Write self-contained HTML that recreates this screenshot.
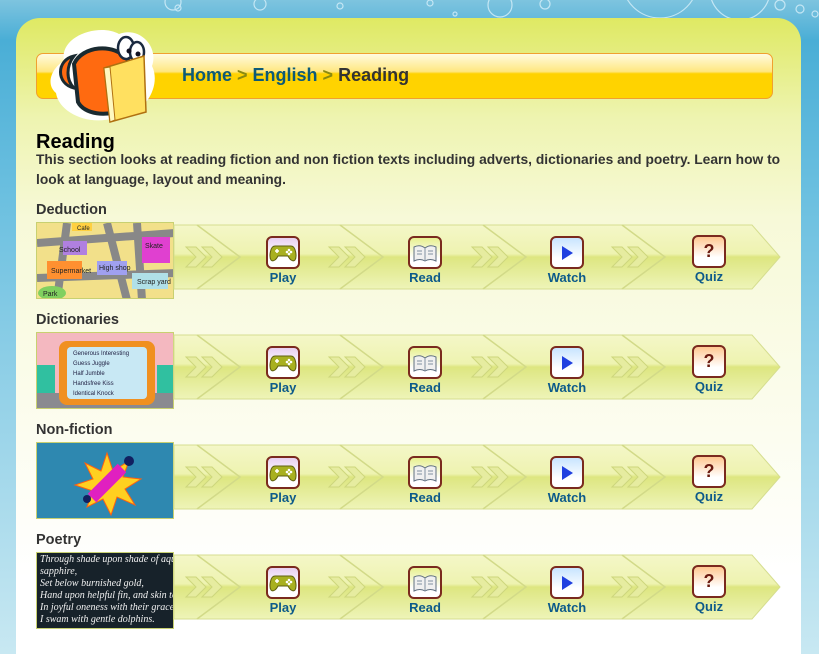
<!DOCTYPE html>
<html><head><meta charset="utf-8"><style>
*{margin:0;padding:0;box-sizing:border-box}
html,body{width:819px;height:654px;overflow:hidden}
body{background:linear-gradient(#7ec4df 0,#4aaed6 40px,#6cc0e0 200px,#c8e8f2 654px);font-family:"Liberation Sans",sans-serif;position:relative}
.panel{position:absolute;left:16px;top:18px;width:785px;height:636px;border-radius:24px 24px 0 0;background:linear-gradient(#dfe963 0,#eef4b0 100px,#f7f9d8 200px,#fcfdf0 420px,#fff 560px)}
.banner{position:absolute;left:36px;top:53px;width:737px;height:46px;border:1px solid #f0a030;border-radius:7px;background:linear-gradient(#fffbe0 0,#ffe780 40%,#ffd200 45%,#ffd400 100%)}
.crumb{position:absolute;left:182px;top:65px;font-size:18px;font-weight:bold;color:#0d5a78}
.crumb .g{color:#8a8a10}.crumb .d{color:#333}
h1{position:absolute;left:36px;top:131px;font-size:20px;color:#000}
.desc{position:absolute;left:36px;top:150px;white-space:nowrap;font-size:13.8px;font-weight:bold;color:#333;line-height:20px}
.lab{position:absolute;left:36px;font-size:14.5px;font-weight:bold;color:#333}
.img{position:absolute;left:36px;width:138px;height:77px;border:1px solid #c8d070;overflow:hidden}
.strip{position:absolute;left:172px;width:612px;height:68px}
.btn{position:absolute;width:60px;text-align:center;font-size:13px;font-weight:bold;color:#0d5a8a}
.ic{width:34px;height:33px;margin:0 auto 1px;border:2px solid #7a2a1e;border-radius:6px;display:flex;align-items:center;justify-content:center}
.p .ic{background:linear-gradient(#e8d0f0,#fff 60%)}
.r .ic{background:linear-gradient(#e8f090,#fff 70%)}
.w .ic{background:linear-gradient(#c8e4ff,#fff 70%)}
.q .ic{background:linear-gradient(#ffc890,#fff 70%)}
</style></head><body>
<svg width="819" height="40" style="position:absolute;left:0;top:0" fill="none" stroke="#d8f0fa" stroke-width="1.2" opacity=".8">
<circle cx="173" cy="2" r="8"/><circle cx="260" cy="4" r="6"/><circle cx="178" cy="8" r="3"/><circle cx="500" cy="5" r="12"/><circle cx="545" cy="4" r="5"/><circle cx="660" cy="-20" r="38"/><circle cx="740" cy="-10" r="30"/><circle cx="780" cy="5" r="5"/><circle cx="800" cy="9" r="4"/><circle cx="815" cy="14" r="3"/><circle cx="430" cy="3" r="3"/><circle cx="340" cy="6" r="3"/><circle cx="455" cy="14" r="2"/></svg>
<div class="panel"></div>
<div class="banner"></div>
<svg style="position:absolute;left:44px;top:26px" width="124" height="100" viewBox="0 0 124 100">
<path d="M20 35 C15 10 55 -3 75 8 C95 0 115 20 108 40 C118 60 100 92 70 92 C45 100 15 87 12 67 C0 57 10 40 20 35Z" fill="#fff"/>
<path d="M30 38 C38 20 70 16 84 34 L82 82 C62 92 40 88 34 76Z" fill="#ff6a10" stroke="#1a2a30" stroke-width="4"/>
<path d="M30 30 C12 34 12 58 30 62 C22 54 22 40 30 30Z" fill="#ff6a10" stroke="#1a2a30" stroke-width="3"/>
<ellipse cx="82" cy="22" rx="8" ry="11" fill="#fff" stroke="#1a2a40" stroke-width="2.5"/><ellipse cx="93" cy="26" rx="7" ry="10" fill="#fff" stroke="#1a2a40" stroke-width="2.5"/>
<circle cx="85" cy="25" r="2.5" fill="#112"/><circle cx="94" cy="28" r="2.5" fill="#112"/>
<path d="M60 42 L100 30 L102 86 L66 96Z" fill="#ffe060" stroke="#b07010" stroke-width="1.5"/>
<path d="M60 42 L66 96 L71 94 L66 41Z" fill="#fff8c0" stroke="#b07010" stroke-width="1"/>
</svg>
<div class="crumb">Home <span class="g">&gt;</span> English <span class="g">&gt;</span> <span class="d">Reading</span></div>
<h1>Reading</h1>
<div class="desc">This section looks at reading fiction and non fiction texts including adverts, dictionaries and poetry. Learn how to<br>look at language, layout and meaning.</div>

<div class="lab" style="top:202px">Deduction</div>
<div class="img" style="top:222px;background:#f0e090">
<svg width="138" height="77"><rect width="138" height="77" fill="#f2e08a"/><path d="M0 20 L138 10 M30 0 L20 77 M70 0 L90 77 M100 0 L105 77 M0 55 L138 50" stroke="#888" stroke-width="8"/><rect x="26" y="18" width="24" height="14" fill="#b080e0"/><rect x="10" y="38" width="35" height="18" fill="#ff9030"/><rect x="105" y="14" width="28" height="26" fill="#e040d0"/><rect x="60" y="38" width="30" height="14" fill="#a0a0f0"/><rect x="95" y="50" width="36" height="16" fill="#b0e0e8"/><ellipse cx="15" cy="70" rx="14" ry="7" fill="#80d060"/><rect x="35" y="0" width="20" height="8" fill="#ffd040"/><text x="14" y="50" font-size="7" fill="#222">Supermarket</text><text x="22" y="29" font-size="7" fill="#222">School</text><text x="108" y="25" font-size="7" fill="#222">Skate</text><text x="100" y="61" font-size="7" fill="#222">Scrap yard</text><text x="6" y="73" font-size="7" fill="#222">Park</text><text x="62" y="47" font-size="7" fill="#222">High shop</text><text x="40" y="7" font-size="6" fill="#222">Cafe</text></svg></div>
<div class="lab" style="top:312px">Dictionaries</div>
<div class="img" style="top:332px;background:#f0a0b0">
<svg width="138" height="77"><rect width="138" height="77" fill="#f4b8c0"/><rect x="0" y="60" width="138" height="17" fill="#8a8a90"/><rect x="0" y="32" width="18" height="28" fill="#30c0a0"/><rect x="120" y="32" width="18" height="28" fill="#30c0a0"/><rect x="22" y="8" width="96" height="64" rx="8" fill="#f09020"/><rect x="30" y="14" width="80" height="52" rx="4" fill="#c8e8f4"/><text x="36" y="22" font-size="6" fill="#224">Generous   Interesting</text><text x="36" y="32" font-size="6" fill="#224">Guess      Juggle</text><text x="36" y="42" font-size="6" fill="#224">Half       Jumble</text><text x="36" y="52" font-size="6" fill="#224">Handsfree  Kiss</text><text x="36" y="62" font-size="6" fill="#224">Identical  Knock</text></svg></div>
<div class="lab" style="top:422px">Non-fiction</div>
<div class="img" style="top:442px;background:#2e88b0">
<svg width="138" height="77"><polygon points="70,10 76,28 92,18 86,34 104,36 88,46 98,62 80,54 74,72 66,56 50,64 56,48 38,42 56,36 48,20 64,28" fill="#ffd020" stroke="#ff6010"/><path d="M55 55 L85 25" stroke="#e020c0" stroke-width="12"/><circle cx="92" cy="18" r="5" fill="#112060"/><circle cx="50" cy="56" r="4" fill="#112060"/></svg></div>
<div class="lab" style="top:532px">Poetry</div>
<div class="img" style="top:552px;background:#17222a;color:#f0f0f0;font-family:'Liberation Serif',serif;font-style:italic;font-size:10px;line-height:12px;padding:1px 0 0 3px;white-space:nowrap">Through shade upon shade of aqua<br>sapphire,<br>Set below burnished gold,<br>Hand upon helpful fin, and skin to s<br>In joyful oneness with their graceful<br>I swam with gentle dolphins.</div>

<svg width="0" height="0" style="position:absolute">
<defs>
<linearGradient id="sg" x1="0" y1="0" x2="0" y2="1"><stop offset="0" stop-color="#f4f7c8"/><stop offset=".45" stop-color="#eef3b0"/><stop offset=".5" stop-color="#dde680"/><stop offset="1" stop-color="#eef4b8"/></linearGradient>
<symbol id="strip" viewBox="0 0 612 68">
<polygon points="2,2 580,2 608,34 580,66 2,66" fill="url(#sg)" stroke="#d6de90"/>
<g fill="none" stroke="#d2da88" stroke-width="1.5"><path d="M25 2 L68 34 L25 66"/><path d="M168 2 L211 34 L168 66"/><path d="M311 2 L354 34 L311 66"/><path d="M450 2 L493 34 L450 66"/></g>
<g fill="#e6eca0" stroke="#cdd67c"><path d="M14 24 L24 24 L34 34 L24 44 L14 44 L24 34Z"/><path d="M30 24 L40 24 L50 34 L40 44 L30 44 L40 34Z"/>
<path d="M157 24 L167 24 L177 34 L167 44 L157 44 L167 34Z"/><path d="M173 24 L183 24 L193 34 L183 44 L173 44 L183 34Z"/>
<path d="M300 24 L310 24 L320 34 L310 44 L300 44 L310 34Z"/><path d="M316 24 L326 24 L336 34 L326 44 L316 44 L326 34Z"/>
<path d="M440 24 L450 24 L460 34 L450 44 L440 44 L450 34Z"/><path d="M456 24 L466 24 L476 34 L466 44 L456 44 L466 34Z"/></g>
</symbol></defs></svg>

<svg class="strip" style="top:223px"><use href="#strip"/></svg>
<svg class="strip" style="top:333px"><use href="#strip"/></svg>
<svg class="strip" style="top:443px"><use href="#strip"/></svg>
<svg class="strip" style="top:553px"><use href="#strip"/></svg>

<div class="btn p" style="left:253px;top:236px"><div class="ic"><svg width="28" height="20"><path d="M6 3 H22 C27 3 28 14 26 17 C24 19 21 17 19 13 H9 C7 17 4 19 2 17 C0 14 1 3 6 3Z" fill="#a8b020" stroke="#606010"/><path d="M6 8 H10 M8 6 V10" stroke="#fff" stroke-width="1.6"/><circle cx="20" cy="7" r="1.3" fill="#fff"/><circle cx="20" cy="11" r="1.3" fill="#fff"/><circle cx="18" cy="9" r="1.3" fill="#fff"/><circle cx="22" cy="9" r="1.3" fill="#fff"/></svg></div>Play</div>
<div class="btn r" style="left:395px;top:236px"><div class="ic"><svg width="26" height="20"><path d="M2 4 Q8 1 13 5 Q18 1 24 4 V18 Q18 15 13 18 Q8 15 2 18Z" fill="#f0f0f0" stroke="#607080"/><path d="M13 5 V18 M5 8 H10 M5 11 H10 M16 8 H21 M16 11 H21" stroke="#8090a0"/></svg></div>Read</div>
<div class="btn w" style="left:537px;top:236px"><div class="ic"><svg width="16" height="18"><path d="M3 2 L14 9 L3 16Z" fill="#2040e0"/></svg></div>Watch</div>
<div class="btn q" style="left:679px;top:235px"><div class="ic" style="font-size:18px;color:#6a1a10">?</div>Quiz</div>

<div class="btn p" style="left:253px;top:346px"><div class="ic"><svg width="28" height="20"><path d="M6 3 H22 C27 3 28 14 26 17 C24 19 21 17 19 13 H9 C7 17 4 19 2 17 C0 14 1 3 6 3Z" fill="#a8b020" stroke="#606010"/><path d="M6 8 H10 M8 6 V10" stroke="#fff" stroke-width="1.6"/><circle cx="20" cy="7" r="1.3" fill="#fff"/><circle cx="20" cy="11" r="1.3" fill="#fff"/><circle cx="18" cy="9" r="1.3" fill="#fff"/><circle cx="22" cy="9" r="1.3" fill="#fff"/></svg></div>Play</div>
<div class="btn r" style="left:395px;top:346px"><div class="ic"><svg width="26" height="20"><path d="M2 4 Q8 1 13 5 Q18 1 24 4 V18 Q18 15 13 18 Q8 15 2 18Z" fill="#f0f0f0" stroke="#607080"/><path d="M13 5 V18 M5 8 H10 M5 11 H10 M16 8 H21 M16 11 H21" stroke="#8090a0"/></svg></div>Read</div>
<div class="btn w" style="left:537px;top:346px"><div class="ic"><svg width="16" height="18"><path d="M3 2 L14 9 L3 16Z" fill="#2040e0"/></svg></div>Watch</div>
<div class="btn q" style="left:679px;top:345px"><div class="ic" style="font-size:18px;color:#6a1a10">?</div>Quiz</div>

<div class="btn p" style="left:253px;top:456px"><div class="ic"><svg width="28" height="20"><path d="M6 3 H22 C27 3 28 14 26 17 C24 19 21 17 19 13 H9 C7 17 4 19 2 17 C0 14 1 3 6 3Z" fill="#a8b020" stroke="#606010"/><path d="M6 8 H10 M8 6 V10" stroke="#fff" stroke-width="1.6"/><circle cx="20" cy="7" r="1.3" fill="#fff"/><circle cx="20" cy="11" r="1.3" fill="#fff"/><circle cx="18" cy="9" r="1.3" fill="#fff"/><circle cx="22" cy="9" r="1.3" fill="#fff"/></svg></div>Play</div>
<div class="btn r" style="left:395px;top:456px"><div class="ic"><svg width="26" height="20"><path d="M2 4 Q8 1 13 5 Q18 1 24 4 V18 Q18 15 13 18 Q8 15 2 18Z" fill="#f0f0f0" stroke="#607080"/><path d="M13 5 V18 M5 8 H10 M5 11 H10 M16 8 H21 M16 11 H21" stroke="#8090a0"/></svg></div>Read</div>
<div class="btn w" style="left:537px;top:456px"><div class="ic"><svg width="16" height="18"><path d="M3 2 L14 9 L3 16Z" fill="#2040e0"/></svg></div>Watch</div>
<div class="btn q" style="left:679px;top:455px"><div class="ic" style="font-size:18px;color:#6a1a10">?</div>Quiz</div>

<div class="btn p" style="left:253px;top:566px"><div class="ic"><svg width="28" height="20"><path d="M6 3 H22 C27 3 28 14 26 17 C24 19 21 17 19 13 H9 C7 17 4 19 2 17 C0 14 1 3 6 3Z" fill="#a8b020" stroke="#606010"/><path d="M6 8 H10 M8 6 V10" stroke="#fff" stroke-width="1.6"/><circle cx="20" cy="7" r="1.3" fill="#fff"/><circle cx="20" cy="11" r="1.3" fill="#fff"/><circle cx="18" cy="9" r="1.3" fill="#fff"/><circle cx="22" cy="9" r="1.3" fill="#fff"/></svg></div>Play</div>
<div class="btn r" style="left:395px;top:566px"><div class="ic"><svg width="26" height="20"><path d="M2 4 Q8 1 13 5 Q18 1 24 4 V18 Q18 15 13 18 Q8 15 2 18Z" fill="#f0f0f0" stroke="#607080"/><path d="M13 5 V18 M5 8 H10 M5 11 H10 M16 8 H21 M16 11 H21" stroke="#8090a0"/></svg></div>Read</div>
<div class="btn w" style="left:537px;top:566px"><div class="ic"><svg width="16" height="18"><path d="M3 2 L14 9 L3 16Z" fill="#2040e0"/></svg></div>Watch</div>
<div class="btn q" style="left:679px;top:565px"><div class="ic" style="font-size:18px;color:#6a1a10">?</div>Quiz</div>
</body></html>
